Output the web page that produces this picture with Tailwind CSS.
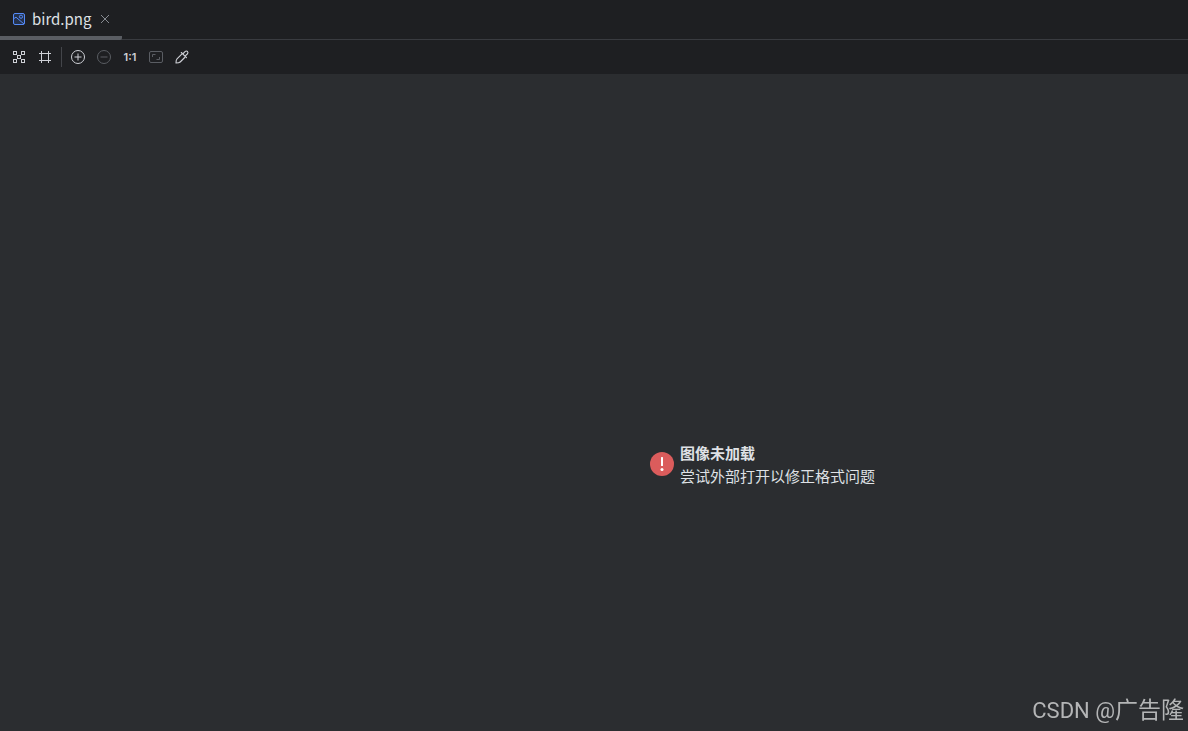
<!DOCTYPE html>
<html lang="zh-CN">
<head>
  <meta charset="UTF-8">
  <meta name="viewport" content="width=device-width, initial-scale=1.0">
  <script src="https://cdn.jsdelivr.net/npm/@tailwindcss/browser@4"></script>
  <title>bird.png</title>
</head>
<body class="bg-[#2b2d30] text-[#dfe1e5] font-['Noto_Sans_CJK_SC',sans-serif]">
  <div class="flex flex-col min-h-screen">

    <!-- Editor tabs -->
    <header class="flex h-10 bg-[#1e1f22] border-b border-[#393b40]">
      <div class="flex items-center h-10 pl-3 pr-2.5 pt-0.5 border-b-4 border-[#5a5d63] rounded-br-xs">
        <svg class="w-3.5 h-3.5 mr-1.5" viewBox="0 0 14 14" fill="none" stroke="#548af7">
          <rect x="1.5" y="1.5" width="11" height="11" rx="1.5" fill="#25324d" />
          <circle cx="9" cy="4.7" r="1.6" />
          <path d="M1.5 6.8L4 5.2L12 12" />
        </svg>
        <a href="#" class="text-[15px] leading-6">bird.png</a>
        <button type="button" aria-label="关闭" class="ml-[7px] flex items-center justify-center w-3.5 h-3.5">
          <svg class="w-3.5 h-3.5" viewBox="0 0 14 14" fill="none" stroke="#868a91">
            <path d="M3 3L11 11M11 3L3 11" />
          </svg>
        </button>
      </div>
    </header>

    <!-- Image toolbar -->
    <div class="flex items-center h-[34px] pl-1.5 bg-[#1e1f22]" role="toolbar">
      <button type="button" aria-label="棋盘" class="flex items-center justify-center w-[26px] h-[26px]">
        <svg class="w-4 h-4" viewBox="0 0 16 16" fill="none" stroke="#ced0d6">
          <rect x="2.5" y="2.5" width="3" height="3" />
          <rect x="10.5" y="2.5" width="3" height="3" />
          <rect x="6.5" y="6.5" width="3" height="3" />
          <rect x="2.5" y="10.5" width="3" height="3" />
          <rect x="10.5" y="10.5" width="3" height="3" />
          <path d="M5.5 5.5L6.5 6.5M10.5 5.5L9.5 6.5M5.5 10.5L6.5 9.5M10.5 10.5L9.5 9.5" />
        </svg>
      </button>
      <button type="button" aria-label="网格" class="flex items-center justify-center w-[26px] h-[26px]">
        <svg class="w-4 h-4" viewBox="0 0 16 16" fill="none" stroke="#ced0d6">
          <path d="M4.5 2V14M11.5 2V14M2 4.5H14M2 11.5H14" />
        </svg>
      </button>
      <div class="w-px h-5 mx-[3px] bg-[#43454a]"></div>
      <button type="button" aria-label="放大" class="flex items-center justify-center w-[26px] h-[26px]">
        <svg class="w-4 h-4" viewBox="0 0 16 16" fill="none" stroke="#ced0d6">
          <circle cx="8" cy="8" r="6.5" />
          <path d="M8 4.5V11.5M4.5 8H11.5" />
        </svg>
      </button>
      <button type="button" aria-label="缩小" disabled class="flex items-center justify-center w-[26px] h-[26px]">
        <svg class="w-4 h-4" viewBox="0 0 16 16" fill="none" stroke="#5a5d63">
          <circle cx="8" cy="8" r="6.5" />
          <path d="M4.5 8H11.5" />
        </svg>
      </button>
      <button type="button" class="w-[26px] h-[26px] text-[11px] font-semibold font-['Inter',sans-serif] text-[#ced0d6]">1:1</button>
      <button type="button" aria-label="适应窗口" disabled class="flex items-center justify-center w-[26px] h-[26px]">
        <svg class="w-4 h-4" viewBox="0 0 16 16" fill="none" stroke="#5a5d63">
          <rect x="1.5" y="2.5" width="13" height="11" rx="1.5" />
          <path d="M4.5 8V5.5H7.5M11.5 8V10.5H8.5" />
        </svg>
      </button>
      <button type="button" aria-label="取色器" class="flex items-center justify-center w-[26px] h-[26px]">
        <svg class="w-4 h-4" viewBox="0 0 16 16" fill="none" stroke="#ced0d6" stroke-width="1.1" stroke-linejoin="round">
          <path d="M8 4.8L3 9.8C2.4 10.4 2 12.5 2 14C3.5 14 5.6 13.6 6.2 13L11.2 8" />
          <path d="M7.3 3.5L12.5 8.7" stroke-linecap="round" />
          <path d="M8.8 5L11 2.7C11.8 1.9 12.8 1.9 13.5 2.5C14.1 3.2 14.1 4.2 13.3 5L11 7.2" />
        </svg>
      </button>
    </div>

    <!-- Load error -->
    <main class="flex-1 flex items-center justify-center pl-[337px] pt-[122px]">
      <div class="flex items-center gap-1.5">
        <svg class="w-6 h-6" viewBox="0 0 24 24">
          <circle cx="12" cy="12" r="12" fill="#db5c5c" />
          <rect x="11" y="5" width="2" height="9" rx="0.5" fill="#fff" />
          <circle cx="12" cy="17.5" r="1.5" fill="#fff" />
        </svg>
        <div class="text-[15px] leading-[23px]">
          <h1 class="font-bold">图像未加载</h1>
          <p>尝试外部打开以修正格式问题</p>
        </div>
      </div>
    </main>
  </div>

  <div class="fixed right-1 bottom-1 text-[23px] leading-8 text-[#b4b5b6] font-['Noto_Sans_CJK_SC',sans-serif]"><span class="text-[22px] font-['Roboto',sans-serif]">CSDN @</span>广告隆</div>
</body>
</html>
